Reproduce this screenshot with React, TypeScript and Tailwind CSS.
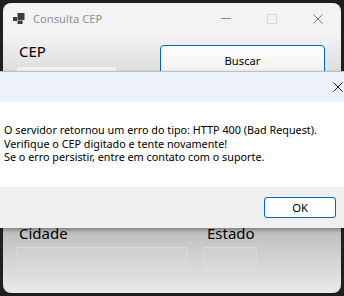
import React from 'react';

const font = { fontFamily: '"Segoe UI", "Noto Sans", "Open Sans", sans-serif' };

const AppIcon: React.FC = () => (
  <svg width="12" height="12" viewBox="0 0 12 12" className="text-[#3b3b3b]">
    <rect x="0" y="4" width="4" height="4" fill="currentColor" />
    <rect x="4.5" y="0" width="7" height="7" fill="currentColor" />
    <rect x="4.5" y="7.5" width="5" height="3.5" fill="currentColor" />
  </svg>
);

const TitleButtons: React.FC = () => (
  <div className="flex items-center h-full">
    <div className="w-[46px] flex justify-center">
      <div className="w-[10px] h-px bg-[#8a8a8a]" />
    </div>
    <div className="w-[46px] flex justify-center">
      <div className="w-[10px] h-[10px] border border-[#d6d6d6] rounded-[1px]" />
    </div>
    <div className="w-[46px] flex justify-center">
      <svg width="10" height="10" viewBox="0 0 10 10">
        <path d="M0.5 0.5 L9.5 9.5 M9.5 0.5 L0.5 9.5" stroke="#7a7a7a" strokeWidth="1" />
      </svg>
    </div>
  </div>
);

const App: React.FC = () => {
  return (
    <div className="relative w-[344px] h-[296px] bg-[#1f1f1f] pt-[3px] pl-[3px] pr-[3px] overflow-hidden" style={font}>
      {/* janela principal */}
      <div className="h-[290px] rounded-lg overflow-hidden flex flex-col">
        <div className="h-[31px] bg-[#f3f3f3] flex items-center justify-between shrink-0">
          <div className="flex items-center gap-[8px] pl-[10px]">
            <AppIcon />
            <span className="text-[11.2px] text-[#8f8f8f] leading-none">Consulta CEP</span>
          </div>
          <TitleButtons />
        </div>

        <div className="flex-1 bg-linear-to-b from-[#f3f3f3] via-[#a0a0a0] via-58% to-[#eaeaea] px-[13px] pt-[10px]">
          <div className="flex justify-between items-start">
            <div className="flex flex-col">
              <span className="text-[15px] text-black leading-none pl-[3px]">CEP</span>
              <div className="mt-[7px] w-[101px] h-[26px] bg-[#f2f2f2] border border-[#dedede]" />
            </div>
            <button className="mt-[1px] mr-[3px] w-[165px] h-[33px] rounded-[4px] border border-[#0067c0] bg-linear-to-b from-[#fdfdfd] to-[#f0f0f0] text-[11.2px] text-black">
              Buscar
            </button>
          </div>

          <div className="mt-[134px] flex">
            <div className="flex flex-col">
              <span className="text-[15px] text-black leading-none pl-[3px]">Cidade</span>
              <div className="mt-[6px] w-[172px] h-[27px] border border-[#d9d9d9] bg-white/5" />
            </div>
            <div className="flex flex-col ml-[15px]">
              <span className="text-[15px] text-black leading-none pl-[4px]">Estado</span>
              <div className="mt-[6px] w-[54px] h-[27px] border border-[#d9d9d9] bg-white/5" />
            </div>
          </div>
        </div>
      </div>

      {/* caixa de mensagem */}
      <div className="absolute left-0 top-[71px] w-[346px] shadow-[0_2px_4px_rgba(0,0,0,0.35)]">
        <div className="h-[31px] bg-[#eef2fa] border-t border-[#bfbfbf] flex items-center justify-end pr-[3px]">
          <svg width="10" height="10" viewBox="0 0 10 10">
            <path d="M0.5 0.5 L9.5 9.5 M9.5 0.5 L0.5 9.5" stroke="#1a1a1a" strokeWidth="1" />
          </svg>
        </div>
        <div className="h-[85px] bg-white pt-[21px] pl-[4px] text-[10.8px] leading-[13.5px] text-black whitespace-nowrap">
          <p>O servidor retornou um erro do tipo: HTTP 400 (Bad Request).</p>
          <p>Verifique o CEP digitado e tente novamente!</p>
          <p>Se o erro persistir, entre em contato com o suporte.</p>
        </div>
        <div className="h-[41px] bg-[#f0f0f0] flex items-start justify-end pr-[10px] pt-[10px]">
          <button className="w-[72px] h-[21px] rounded-[3px] border border-[#0067c0] bg-[#fdfdfd] text-[11.2px] text-black leading-none">
            OK
          </button>
        </div>
      </div>
    </div>
  );
};

export default App;
